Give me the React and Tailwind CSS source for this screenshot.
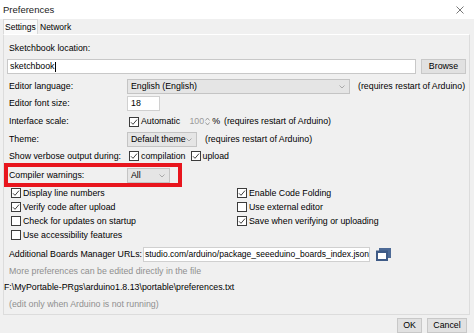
import React from "react";

function Check({ on }) {
  return (
    <span className="w-[10px] h-[10px] border border-[#3c3c3c] bg-white flex items-center justify-center shrink-0">
      {on && (
        <svg width="8" height="8" viewBox="0 0 8 8">
          <path d="M1 4.3 L3 6.3 L7 1.6" fill="none" stroke="#2a2a2a" strokeWidth="0.9" />
        </svg>
      )}
    </span>
  );
}

function Chevron() {
  return (
    <svg width="6" height="4" viewBox="0 0 6 4" className="shrink-0">
      <path d="M0.5 0.5 L3 3 L5.5 0.5" fill="none" stroke="#9a9a9a" strokeWidth="0.8" />
    </svg>
  );
}

function Combo({ label, width }) {
  return (
    <div
      className={`h-[15px] ${width} shrink-0 bg-[#e5e5e5] border border-[#c4c4c4] flex items-center justify-between pl-[3px] pr-[4px]`}
    >
      <span>{label}</span>
      <Chevron />
    </div>
  );
}

function Button({ children, width }) {
  return (
    <div
      className={`h-[15px] ${width} bg-[#e1e1e1] border border-[#c8c8c8] flex items-center justify-center`}
    >
      {children}
    </div>
  );
}

function CheckItem({ on, text }) {
  return (
    <div className="h-[14px] flex items-center gap-[2px]">
      <Check on={on} />
      <span>{text}</span>
    </div>
  );
}

export default function App() {
  const restart = "(requires restart of Arduino)";

  return (
    <div className="w-[474px] h-[333px] bg-[#f0f0f0] overflow-hidden whitespace-nowrap text-black text-[8.8px] leading-none flex flex-col font-['Liberation_Sans',Arial,sans-serif]">
      {/* Title bar */}
      <div className="h-[19px] bg-white flex items-center justify-between pl-[3px] pr-[10px] text-[9.5px] text-[#222]">
        <span>Preferences</span>
        <svg width="8" height="8" viewBox="0 0 8 8">
          <path d="M0.5 0.5 L7.5 7.5 M7.5 0.5 L0.5 7.5" stroke="#555" strokeWidth="0.8" />
        </svg>
      </div>

      {/* Tabs */}
      <div className="h-[15px] flex items-end pl-[3px] text-[8.5px]">
        <div className="h-[15px] w-[35px] bg-[#fafafa] border border-b-0 border-[#d9d9d9] flex items-center pl-[1px]">
          Settings
        </div>
        <div className="h-[13px] w-[36px] flex items-center pl-[2px]">Network</div>
      </div>

      {/* Panel */}
      <div className="h-[281px] ml-[3px] mr-[4px] border border-[#dcdcdc] border-t-white flex flex-col pl-[5px] pr-[3px]">
        <div className="h-[14px] mt-[6px] flex items-center">Sketchbook location:</div>

        <div className="h-[15px] mt-[4px] flex items-center -ml-[2px]">
          <div className="h-[15px] w-[410px] bg-white border border-[#c8c8c8] flex items-center pl-[2px]">
            sketchbook<span className="w-px h-[10px] bg-black" />
          </div>
          <div className="ml-[5px]">
            <Button width="w-[45px]">Browse</Button>
          </div>
        </div>

        <div className="h-[15px] mt-[5px] flex items-center">
          <span className="w-[118px] shrink-0">Editor language:</span>
          <Combo label="English (English)" width="w-[223px]" />
          <span className="ml-[8px]">{restart}</span>
        </div>

        <div className="h-[15px] mt-[2px] flex items-center">
          <span className="w-[118px] shrink-0">Editor font size:</span>
          <div className="h-[15px] w-[33px] bg-white border border-[#d0d0d0] flex items-center pl-[3px]">18</div>
        </div>

        <div className="h-[15px] mt-[3px] flex items-center">
          <span className="w-[118px] shrink-0">Interface scale:</span>
          <div className="ml-[2px] flex items-center gap-[2px]">
            <Check on />
            <span>Automatic</span>
          </div>
          <div className="ml-[3px] h-[14px] w-[27px] flex items-center justify-end gap-[1px] text-[#9a9a9a]">
            <span>100</span>
            <svg width="5" height="9" viewBox="0 0 5 9">
              <path d="M0.5 3.5 L2.5 1 L4.5 3.5 M0.5 5.5 L2.5 8 L4.5 5.5" fill="none" stroke="#8a8a8a" strokeWidth="0.8" />
            </svg>
          </div>
          <span className="ml-[2px]">%</span>
          <span className="ml-[4px]">{restart}</span>
        </div>

        <div className="h-[15px] mt-[3px] flex items-center">
          <span className="w-[118px] shrink-0">Theme:</span>
          <Combo label="Default theme" width="w-[70px]" />
          <span className="ml-[8px]">{restart}</span>
        </div>

        <div className="h-[14px] mt-[2px] flex items-center">
          <span className="w-[118px] shrink-0">Show verbose output during:</span>
          <div className="ml-[2px] flex items-center gap-[2px]">
            <Check on />
            <span>compilation</span>
          </div>
          <div className="ml-[5px] flex items-center gap-[2px]">
            <Check on />
            <span>upload</span>
          </div>
        </div>

        <div className="relative h-[15px] mt-[5px] flex items-center">
          <span className="w-[118px] shrink-0">Compiler warnings:</span>
          <Combo label="All" width="w-[43px]" />
          {/* annotation overlay */}
          <div className="absolute -left-[5px] -top-[5px] w-[178px] h-[24px] border-[4px] border-[#e8151d]" />
        </div>

        <div className="mt-[3px] flex">
          <div className="w-[228px] pl-[2px] flex flex-col">
            <CheckItem on text="Display line numbers" />
            <CheckItem on text="Verify code after upload" />
            <CheckItem text="Check for updates on startup" />
            <CheckItem text="Use accessibility features" />
          </div>
          <div className="flex flex-col">
            <CheckItem on text="Enable Code Folding" />
            <CheckItem text="Use external editor" />
            <CheckItem on text="Save when verifying or uploading" />
          </div>
        </div>

        <div className="h-[15px] mt-[5px] flex items-center">
          <span className="w-[134px] shrink-0">Additional Boards Manager URLs:</span>
          <div className="h-[15px] w-[227px] shrink-0 bg-white border border-[#d0d0d0] flex items-center pl-[1px] overflow-hidden text-[8.5px]">
            studio.com/arduino/package_seeeduino_boards_index.json
          </div>
          <svg width="15" height="13" viewBox="0 0 15 13" className="ml-[6px] shrink-0">
            <rect x="3" y="0" width="12" height="10" fill="#4d6a96" />
            <rect x="0" y="2.5" width="12" height="10.5" fill="#3e5a86" />
            <rect x="2" y="5" width="8" height="6" fill="#ffffff" />
          </svg>
        </div>

        <div className="h-[14px] mt-[2px] flex items-center text-[#8f8f8f]">
          More preferences can be edited directly in the file
        </div>
        <div className="h-[14px] mt-[2px] flex items-center -ml-[5px]">
          F:\MyPortable-PRgs\arduino1.8.13\portable\preferences.txt
        </div>
        <div className="h-[14px] mt-[3px] flex items-center text-[#8f8f8f]">
          (edit only when Arduino is not running)
        </div>
      </div>

      {/* Buttons */}
      <div className="flex justify-end gap-[5px] pt-[3px] pr-[7px]">
        <Button width="w-[25px]">OK</Button>
        <Button width="w-[40px]">Cancel</Button>
      </div>
    </div>
  );
}
